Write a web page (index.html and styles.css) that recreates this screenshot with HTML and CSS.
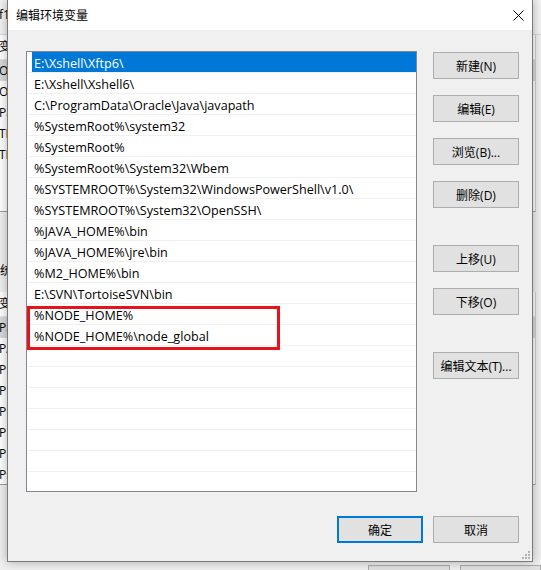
FILE: index.html
```html
<!DOCTYPE html>
<html lang="zh-CN">
<head>
  <meta charset="UTF-8">
  <meta name="viewport" content="width=device-width, initial-scale=1.0">
  <title>编辑环境变量</title>
  <link rel="stylesheet" href="styles.css">
</head>
<body>
  <div class="desktop">

    <!-- Environment variables window sitting behind the dialog -->
    <div class="back-window">
      <div class="back-caption">f1</div>
      <div class="back-list upper">
        <div class="back-row head">变</div>
        <div class="back-row sel">Oı</div>
        <div class="back-row">Oı</div>
        <div class="back-row">Pa</div>
        <div class="back-row">TE</div>
        <div class="back-row">TM</div>
      </div>
      <div class="back-label">统</div>
      <div class="back-list lower">
        <div class="back-row head">变</div>
        <div class="back-row sel">Pa</div>
        <div class="back-row">PA</div>
        <div class="back-row">PR</div>
        <div class="back-row">PR</div>
        <div class="back-row">PR</div>
        <div class="back-row">PR</div>
        <div class="back-row">PR</div>
        <div class="back-row">Ps</div>
      </div>
      <div class="back-buttons">
        <span class="back-btn"></span>
        <span class="back-btn"></span>
      </div>
    </div>

    <!-- Edit environment variable dialog -->
    <div class="dialog">
      <div class="titlebar">
        <span class="title">编辑环境变量</span>
        <svg class="close" width="11" height="11" viewBox="0 0 11 11">
          <path d="M0.5 0.5 L10.5 10.5 M10.5 0.5 L0.5 10.5" stroke="#000" stroke-width="1" fill="none"/>
        </svg>
      </div>

      <div class="dialog-body">
        <div class="main">
          <div class="path-list">
            <div class="row selected"><span class="cell">E:\Xshell\Xftp6\</span></div>
            <div class="row"><span class="cell">E:\Xshell\Xshell6\</span></div>
            <div class="row"><span class="cell">C:\ProgramData\Oracle\Java\javapath</span></div>
            <div class="row"><span class="cell">%SystemRoot%\system32</span></div>
            <div class="row"><span class="cell">%SystemRoot%</span></div>
            <div class="row"><span class="cell">%SystemRoot%\System32\Wbem</span></div>
            <div class="row"><span class="cell">%SYSTEMROOT%\System32\WindowsPowerShell\v1.0\</span></div>
            <div class="row"><span class="cell">%SYSTEMROOT%\System32\OpenSSH\</span></div>
            <div class="row"><span class="cell">%JAVA_HOME%\bin</span></div>
            <div class="row"><span class="cell">%JAVA_HOME%\jre\bin</span></div>
            <div class="row"><span class="cell">%M2_HOME%\bin</span></div>
            <div class="row"><span class="cell">E:\SVN\TortoiseSVN\bin</span></div>
            <div class="row"><span class="cell">%NODE_HOME%</span></div>
            <div class="row"><span class="cell">%NODE_HOME%\node_global</span></div>
            <div class="row"><span class="cell"></span></div>
            <div class="row"><span class="cell"></span></div>
            <div class="row"><span class="cell"></span></div>
            <div class="row"><span class="cell"></span></div>
            <div class="row"><span class="cell"></span></div>
            <div class="row"><span class="cell"></span></div>
            <div class="row"><span class="cell"></span></div>

            <!-- red box marking the two node entries -->
            <div class="mark"></div>
          </div>

          <div class="side-buttons">
            <button class="btn">新建(N)</button>
            <button class="btn">编辑(E)</button>
            <button class="btn">浏览(B)...</button>
            <button class="btn">删除(D)</button>
            <button class="btn spaced">上移(U)</button>
            <button class="btn">下移(O)</button>
            <button class="btn spaced">编辑文本(T)...</button>
          </div>
        </div>

        <div class="footer">
          <button class="btn default">确定</button>
          <button class="btn">取消</button>
        </div>

        <svg class="grip" width="9" height="9" viewBox="0 0 9 9">
          <rect x="6" y="0" width="2" height="2" fill="#b4b4b4"/>
          <rect x="3" y="3" width="2" height="2" fill="#b4b4b4"/>
          <rect x="6" y="3" width="2" height="2" fill="#b4b4b4"/>
          <rect x="0" y="6" width="2" height="2" fill="#b4b4b4"/>
          <rect x="3" y="6" width="2" height="2" fill="#b4b4b4"/>
          <rect x="6" y="6" width="2" height="2" fill="#b4b4b4"/>
        </svg>
      </div>
    </div>

  </div>
</body>
</html>
```

FILE: styles.css
```css
body {
  margin: 0;
  font-family: "Open Sans", "Noto Sans CJK SC", sans-serif;
  font-size: 12px;
  color: #000;
  overflow: hidden;
}

.desktop {
  position: relative;
  width: 541px;
  height: 570px;
  background-color: #f0f0f0;
  overflow: hidden;
}

/* ---- window behind ---- */

.back-window {
  position: absolute;
  left: 0;
  top: 0;
  width: 541px;
  height: 570px;
  background-color: #f0f0f0;
}

.back-caption {
  height: 34px;
  line-height: 30px;
  margin-left: -1px;
  background-color: #f3f3f3;
  border-bottom: 1px solid #d8d8d8;
  white-space: nowrap;
}

.back-list {
  width: 535px;
  background-color: #fff;
  border-bottom: 1px solid #a0a0a0;
  border-right: 1px solid #d0d0d0;
}

.back-list.upper {
  height: 176px;
}

.back-list.lower {
  margin-top: 8px;
  height: 192px;
}

.back-row {
  height: 21px;
  line-height: 21px;
  margin-left: -1px;
  white-space: nowrap;
}

.back-row.head {
  height: 24px;
  line-height: 24px;
  border-bottom: 1px solid #e5e5e5;
}

.back-row.sel {
  background-color: #d9d9d9;
}

.back-label {
  height: 72px;
  line-height: 118px;
  white-space: nowrap;
}

.back-buttons {
  display: flex;
  gap: 10px;
  margin-top: 80px;
  padding-left: 368px;
}

.back-btn {
  width: 84px;
  height: 24px;
  background-color: #e1e1e1;
  border: 1px solid #adadad;
}

/* ---- dialog ---- */

.dialog {
  position: absolute;
  left: 7px;
  top: -1px;
  width: 526px;
  height: 563px;
  box-sizing: border-box;
  border: 1px solid #7a7a7a;
  background-color: #f0f0f0;
  box-shadow: 0 0 10px rgba(0, 0, 0, 0.3);
  display: flex;
  flex-direction: column;
}

.titlebar {
  height: 30px;
  flex-shrink: 0;
  background-color: #fff;
  display: flex;
  align-items: center;
  justify-content: space-between;
  padding: 0 8px 0 8px;
}

.title {
  font-size: 12px;
  line-height: 30px;
  padding-top: 1px;
}

.close {
  display: block;
  margin-top: 1px;
}

.dialog-body {
  position: relative;
  flex: 1;
  padding: 21px 13px 0 18px;
}

.main {
  display: flex;
  gap: 16px;
}

.path-list {
  position: relative;
  width: 391px;
  height: 441px;
  box-sizing: border-box;
  border: 1px solid #828790;
  background-color: #fff;
  padding-left: 1px;
  overflow: hidden;
  font-size: 12.6px;
}

.row {
  display: flex;
  height: 21px;
  box-sizing: border-box;
  border-bottom: 1px solid #f0f0f0;
}

.cell {
  flex: 1;
  margin-left: 4px;
  padding-left: 2px;
  padding-top: 2px;
  box-sizing: border-box;
  line-height: 20px;
  white-space: nowrap;
}

.row.selected .cell {
  background-color: #0078d7;
  color: #fff;
}

.mark {
  position: absolute;
  left: 0;
  top: 254px;
  width: 253px;
  height: 44px;
  box-sizing: border-box;
  border: 3px solid #e5141c;
}

.side-buttons {
  display: flex;
  flex-direction: column;
  gap: 16px;
  padding-top: 1px;
}

.btn {
  width: 86px;
  height: 27px;
  box-sizing: border-box;
  padding: 0;
  font-family: "Open Sans", "Noto Sans CJK SC", sans-serif;
  font-size: 12px;
  color: #000;
  background-color: #e1e1e1;
  border: 1px solid #adadad;
}

.btn.spaced {
  margin-top: 21px;
}

.footer {
  display: flex;
  justify-content: flex-end;
  gap: 10px;
  margin-top: 24px;
}

.btn.default {
  border: 2px solid #0078d7;
}

.grip {
  position: absolute;
  right: 1px;
  bottom: 1px;
}
```
